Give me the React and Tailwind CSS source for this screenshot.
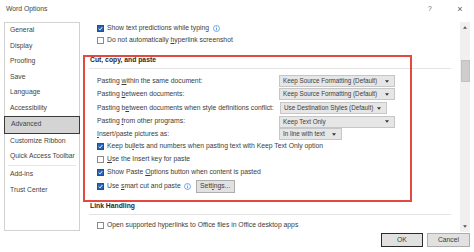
import React from "react";

const Check = ({ checked }) =>
  checked ? (
    <span className="w-[7px] h-[7px] bg-[#2a62b3] border border-[#1f4f99] flex items-center justify-center shrink-0">
      <svg width="5" height="5" viewBox="0 0 10 10">
        <path d="M1.5 5.2 L4 7.8 L8.6 2.2" stroke="white" strokeWidth="1.9" fill="none" />
      </svg>
    </span>
  ) : (
    <span className="w-[7px] h-[7px] bg-white border border-[#8a8a8a] shrink-0" />
  );

const Info = () => (
  <svg width="7" height="7" viewBox="0 0 14 14" className="shrink-0">
    <circle cx="7" cy="7" r="6" stroke="#2f7ed8" strokeWidth="1.3" fill="white" />
    <rect x="6.3" y="6" width="1.4" height="4.6" fill="#2f7ed8" />
    <circle cx="7" cy="3.9" r="0.95" fill="#2f7ed8" />
  </svg>
);

const Arrow = () => (
  <svg width="4" height="3" viewBox="0 0 8 5" className="shrink-0">
    <path d="M0 0 H8 L4 5 Z" fill="#333" />
  </svg>
);

const Dropdown = ({ w, text }) => (
  <div className={`h-[12px] ${w} bg-[#e6e6e6] border border-[#c6c6c6] flex items-center justify-between pl-[3px] pr-[5px] text-[6.3px]`}>
    <span className="whitespace-nowrap leading-none">{text}</span>
    <Arrow />
  </div>
);

const CheckRow = ({ checked, h, children, extra }) => (
  <div className={`${h} flex items-center pl-[17px] gap-[3px] whitespace-nowrap`}>
    <Check checked={checked} />
    <span className="leading-none">{children}</span>
    {extra}
  </div>
);

const DropRow = ({ h, label, children }) => (
  <div className={`${h} flex items-center pl-[17px] whitespace-nowrap`}>
    <span className="w-[182px] shrink-0 leading-none">{label}</span>
    {children}
  </div>
);

const items = [
  "General",
  "Display",
  "Proofing",
  "Save",
  "Language",
  "Accessibility",
  "Advanced",
  "Customize Ribbon",
  "Quick Access Toolbar",
];

export default function App() {
  return (
    <div
      className="relative w-[474px] h-[252px] bg-white overflow-hidden text-[6.8px] text-[#3c3c3c]"
      style={{ fontFamily: '"Liberation Sans", Arial, sans-serif' }}
    >
      {/* title bar */}
      <div className="h-[18px] flex items-center pl-[6px] text-[#444]">
        <span className="leading-none">Word Options</span>
        <span className="ml-auto w-[8px] text-center leading-none text-[#666] mr-[22px]">?</span>
        <span className="w-[8px] text-center leading-none text-[#555] text-[9px] mr-[10px]">×</span>
      </div>

      {/* body */}
      <div className="mt-[4px] flex h-[210px] px-[4px]">
        {/* sidebar */}
        <div className="w-[76px] h-[209px] border border-[#d2d2d2] flex flex-col text-[#444]">
          {items.map((it) =>
            it === "Advanced" ? (
              <div
                key={it}
                className="h-[17.5px] -mx-px flex items-center pl-[6px] bg-[#d4d4d4] border border-[#3a3a3a]"
              >
                <span className="leading-none">{it}</span>
              </div>
            ) : (
              <div key={it} className="h-[15.5px] flex items-center pl-[5px]">
                <span className="leading-none">{it}</span>
              </div>
            )
          )}
          <div className="h-[2.5px] flex items-center px-[3px]">
            <div className="h-px w-full bg-[#e6e6e6]" />
          </div>
          <div className="h-[15.5px] flex items-center pl-[5px]">
            <span className="leading-none">Add-ins</span>
          </div>
          <div className="h-[15.5px] flex items-center pl-[5px]">
            <span className="leading-none">Trust Center</span>
          </div>
        </div>

        {/* content */}
        <div className="flex-1 h-[210px] overflow-hidden flex flex-col">
          <CheckRow checked h="h-[13px] mt-[0.5px]" extra={<span className="ml-[1px]"><Info /></span>}>
            Show text predictions while typing
          </CheckRow>
          <CheckRow h="h-[13px]">
            Do not automatically <u className="underline-offset-1">h</u>yperlink screenshot
          </CheckRow>

          <div className="mt-[7.5px] h-[14px] flex items-center pl-[10px] font-bold text-[#2a2a2a]">
            <span className="leading-none">Cut, copy, and paste</span>
          </div>
          <div className="mt-[2px] h-px mx-[9px] bg-[#e4e4e4]" />

          <div className="mt-[5.5px] flex flex-col">
            <DropRow h="h-[13px]" label={<>Pasting <u className="underline-offset-1">w</u>ithin the same document:</>}>
              <Dropdown w="w-[116px]" text="Keep Source Formatting (Default)" />
            </DropRow>
            <DropRow h="h-[13px]" label={<>Pasting <u className="underline-offset-1">b</u>etween documents:</>}>
              <Dropdown w="w-[116px]" text="Keep Source Formatting (Default)" />
            </DropRow>
            <DropRow h="h-[15px]" label={<>Pasting b<u className="underline-offset-1">e</u>tween documents when style definitions conflict:</>}>
              <div className="ml-px">
                <Dropdown w="w-[107px]" text="Use Destination Styles (Default)" />
              </div>
            </DropRow>
            <DropRow h="h-[12px]" label={<>Pasting <u className="underline-offset-1">f</u>rom other programs:</>}>
              <Dropdown w="w-[116px]" text="Keep Text Only" />
            </DropRow>
            <DropRow h="h-[13px]" label={<><u className="underline-offset-1">I</u>nsert/paste pictures as:</>}>
              <Dropdown w="w-[63px]" text="In line with text" />
            </DropRow>
            <CheckRow checked h="h-[12px]">
              Keep bu<u className="underline-offset-1">l</u>lets and numbers when pasting text with Keep Text Only option
            </CheckRow>
            <CheckRow h="h-[13px]">
              <u className="underline-offset-1">U</u>se the Insert key for paste
            </CheckRow>
            <CheckRow checked h="h-[13px]">
              Show Paste <u className="underline-offset-1">O</u>ptions button when content is pasted
            </CheckRow>
            <CheckRow
              checked
              h="h-[16px]"
              extra={
                <>
                  <Info />
                  <div className="ml-[2px] w-[39px] h-[13px] bg-[#e1e1e1] border border-[#adadad] flex items-center justify-center">
                    <span className="leading-none">
                      Sett<u className="underline-offset-1">i</u>ngs...
                    </span>
                  </div>
                </>
              }
            >
              Use <u className="underline-offset-1">s</u>mart cut and paste
            </CheckRow>
          </div>

          <div className="mt-[5px] h-[14px] flex items-center pl-[10px] font-bold text-[#2a2a2a]">
            <span className="leading-none">Link Handling</span>
          </div>
          <div className="mt-px h-px mx-[9px] bg-[#e4e4e4]" />
          <CheckRow h="h-[13px] mt-[4.5px] shrink-0">
            Open supported hyperlinks to Office files in Office desktop apps
          </CheckRow>
        </div>

        {/* scrollbar */}
        <div className="w-[10px] h-[210px] bg-[#f0f0f0] flex flex-col items-center">
          <div className="h-[11px] w-full flex items-center justify-center">
            <svg width="4" height="3" viewBox="0 0 8 5">
              <path d="M0 5 H8 L4 0 Z" fill="#555" />
            </svg>
          </div>
          <div className="mt-[27px] h-[22px] w-[9px] bg-[#cdcdcd] border border-[#c2c2c2]" />
          <div className="mt-auto h-[11px] w-full flex items-center justify-center">
            <svg width="4" height="3" viewBox="0 0 8 5">
              <path d="M0 0 H8 L4 5 Z" fill="#555" />
            </svg>
          </div>
        </div>
      </div>

      {/* footer */}
      <div className="mt-px flex justify-end gap-[4px] pr-[4px]">
        <div className="w-[42px] h-[14px] bg-[#e1e1e1] border-[1.5px] border-[#2b2b2b] flex items-center justify-center">
          <span className="leading-none">OK</span>
        </div>
        <div className="w-[43px] h-[14px] bg-[#e1e1e1] border border-[#adadad] flex items-center justify-center">
          <span className="leading-none">Cancel</span>
        </div>
      </div>

      {/* red annotation box */}
      <div className="absolute left-[83px] top-[55px] w-[329px] h-[147px] border-2 border-[#e4493f] pointer-events-none" />
    </div>
  );
}
